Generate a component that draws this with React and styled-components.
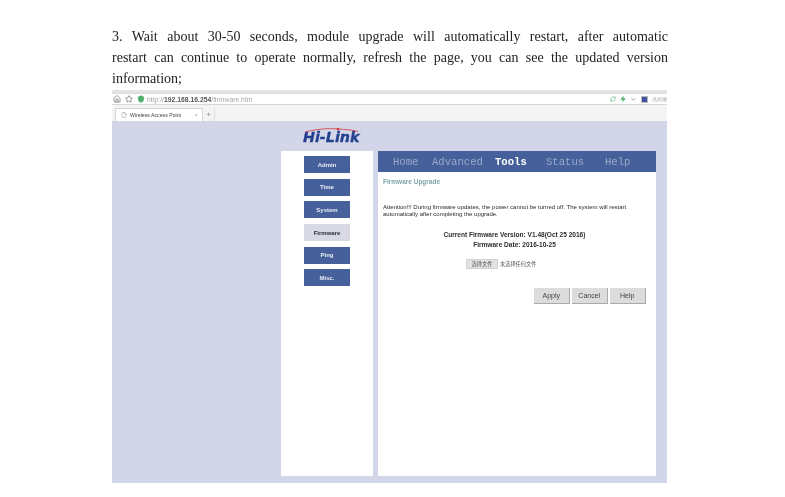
import React from 'react';
import styled, { createGlobalStyle } from 'styled-components';
import { Home, Star, ShieldCheck, File, RefreshCw, Zap, ChevronDown } from 'lucide-react';

const GlobalStyle = createGlobalStyle`
  html, body {
    margin: 0;
    padding: 0;
    background: #fff;
  }
`;

const Page = styled.div`
  width: 785px;
  height: 497px;
  overflow: hidden;
  box-sizing: border-box;
  padding: 26px 117px 0 112px;
`;

const Paragraph = styled.div`
  margin: 0 0 1px;
  font-family: "Liberation Serif", serif;
  font-size: 14px;
  line-height: 21px;
  color: #222;
  filter: blur(0.25px);
`;

const Line = styled.div`
  white-space: nowrap;
  text-align: ${(p) => (p.$last ? 'left' : 'justify')};
  text-align-last: ${(p) => (p.$last ? 'left' : 'justify')};
`;

const Shot = styled.div`
  width: 555px;
  height: 393px;
  display: flex;
  flex-direction: column;
  filter: blur(0.4px);
`;

const TopStrip = styled.div`
  height: 3px;
  background: #e4e4e4;
`;

const UrlBar = styled.div`
  height: 12px;
  box-sizing: border-box;
  display: flex;
  align-items: center;
  gap: 4px;
  padding: 0 0 0 1px;
  background: #fff;
  border-bottom: 1px solid #d8d8d8;
  border-top: 1px solid #ddd;
  font-family: "Liberation Sans", sans-serif;
  font-size: 6.8px;
  color: #a8a8a8;
`;

const UrlText = styled.span`
  margin-left: -2px;
  flex: 1;
  b {
    color: #555;
    font-weight: 700;
  }
`;

const UrlExtras = styled.div`
  display: flex;
  align-items: center;
  gap: 4px;
  font-size: 5px;
  color: #999;
`;

const Avatar = styled.span`
  width: 7px;
  height: 7px;
  background: #3f55a0;
  border: 1px solid #bbb;
  box-sizing: border-box;
`;

const TabBar = styled.div`
  height: 16px;
  display: flex;
  align-items: flex-end;
  background: #f4f4f4;
  padding-left: 3px;
  font-family: "Liberation Sans", sans-serif;
  font-size: 5.2px;
  color: #444;
`;

const Tab = styled.div`
  width: 88px;
  height: 13px;
  box-sizing: border-box;
  display: flex;
  align-items: center;
  gap: 3px;
  padding: 0 4px 0 5px;
  background: #fff;
  border: 1px solid #d4d4d4;
  border-bottom: none;
  span {
    flex: 1;
  }
  i {
    font-style: normal;
    font-size: 6px;
    color: #aaa;
  }
`;

const NewTab = styled.div`
  width: 11px;
  height: 13px;
  line-height: 13px;
  text-align: center;
  font-size: 8px;
  color: #888;
  border-right: 1px solid #ddd;
`;

const Site = styled.div`
  flex: 1;
  min-height: 0;
  background: #d3d6e8;
  display: flex;
  flex-direction: column;
  align-items: flex-end;
  padding-right: 11px;
`;

const LogoBar = styled.div`
  height: 30px;
  width: 375px;
  display: flex;
  align-items: center;
  padding-left: 22px;
  box-sizing: border-box;
`;

const Logo = styled.div`
  position: relative;
  top: 1px;
  font-family: "DejaVu Sans", sans-serif;
  font-size: 14.3px;
  font-weight: 700;
  font-style: italic;
  line-height: 15px;
  color: #23408f;
  -webkit-text-stroke: 0.3px #23408f;
  svg {
    position: absolute;
    left: 0;
    top: -3px;
  }
`;

const Columns = styled.div`
  width: 375px;
  height: 325px;
  display: flex;
  gap: 5px;
`;

const Sidebar = styled.div`
  width: 92px;
  background: #fff;
  display: flex;
  flex-direction: column;
  align-items: center;
  gap: 5.7px;
  padding-top: 5px;
  box-sizing: border-box;
`;

const NavButton = styled.div`
  width: 46px;
  height: 17px;
  display: flex;
  align-items: center;
  justify-content: center;
  font-family: "Liberation Sans", sans-serif;
  font-size: 6px;
  font-weight: 700;
  background: ${(p) => (p.$active ? '#d9d9e6' : '#45609a')};
  color: ${(p) => (p.$active ? '#2a2a3a' : '#e8ecf6')};
`;

const Main = styled.div`
  flex: 1;
  background: #fff;
  display: flex;
  flex-direction: column;
`;

const MainNav = styled.div`
  height: 21px;
  background: #45609a;
  display: flex;
  align-items: center;
  padding-left: 15px;
  font-family: "Liberation Mono", monospace;
  font-size: 10.6px;
  color: #9aa9c8;
`;

const MainNavItem = styled.span`
  width: ${(p) => p.$width}px;
  color: ${(p) => (p.$active ? '#fff' : '#9aa9c8')};
  font-weight: ${(p) => (p.$active ? 700 : 400)};
`;

const Content = styled.div`
  padding: 5px 5px 0 5px;
  font-family: "Liberation Sans", sans-serif;
  font-size: 6px;
  color: #2a2a2a;
`;

const SectionTitle = styled.div`
  font-size: 6.5px;
  font-weight: 700;
  line-height: 9px;
  color: #7fa5ab;
`;

const Notice = styled.div`
  margin-top: 18px;
  line-height: 7px;
  font-size: 6px;
`;

const VersionBlock = styled.div`
  margin-top: 12px;
  text-align: center;
  font-size: 6.55px;
  font-weight: 700;
  line-height: 10px;
  color: #2d2d2d;
  padding-right: 5px;
`;

const FileRow = styled.div`
  margin-top: 9px;
  display: flex;
  align-items: center;
  gap: 2px;
  padding-left: 83px;
  font-family: "Noto Sans CJK SC", sans-serif;
  font-size: 5.2px;
  line-height: 8px;
  color: #555;
`;

const FileButton = styled.span`
  width: 30px;
  height: 8px;
  line-height: 8px;
  text-align: center;
  background: #e2e2e2;
  border: 1px solid #d0d0d0;
`;

const ActionRow = styled.div`
  margin-top: 19px;
  display: flex;
  justify-content: flex-end;
  gap: 1.5px;
  padding-right: 5px;
`;

const ActionButton = styled.div`
  width: 36.5px;
  height: 16px;
  line-height: 15px;
  text-align: center;
  font-size: 7px;
  color: #444;
  background: #dcdcdc;
  border-right: 1px solid #aaa;
  border-bottom: 1px solid #aaa;
  box-sizing: border-box;
`;

const navItems = ['Admin', 'Time', 'System', 'Firmware', 'Ping', 'Misc.'];
const tabs = [
  ['Home', 39],
  ['Advanced', 63],
  ['Tools', 51],
  ['Status', 59],
  ['Help', 30],
];

const App = () => {
  return (
    <Page>
      <GlobalStyle />
      <Paragraph>
        <Line>3. Wait about 30-50 seconds, module upgrade will automatically restart, after automatic</Line>
        <Line>restart can continue to operate normally, refresh the page, you can see the updated version</Line>
        <Line $last>information;</Line>
      </Paragraph>
      <Shot>
        <TopStrip />
        <UrlBar>
          <Home size={8} color="#666" />
          <Star size={8} color="#666" />
          <ShieldCheck size={8} color="#4caf6a" fill="#4caf6a" />
          <UrlText>
            http://<b>192.168.16.254</b>/firmware.htm
          </UrlText>
          <UrlExtras>
            <RefreshCw size={6} color="#4caf6a" />
            <Zap size={6} color="#4caf6a" fill="#4caf6a" />
            <ChevronDown size={7} color="#666" />
            <Avatar />
            <span>点此搜</span>
          </UrlExtras>
        </UrlBar>
        <TabBar>
          <Tab>
            <File size={6} color="#999" />
            <span>Wireless Access Point</span>
            <i>×</i>
          </Tab>
          <NewTab>+</NewTab>
        </TabBar>
        <Site>
          <LogoBar>
            <Logo>
              <svg width="58" height="6" viewBox="0 0 58 6">
                <path d="M2 5 C14 2 26 1 35 2 C42 2.5 50 3 55 4.5" fill="none" stroke="#d8323c" strokeWidth="0.8" />
                <circle cx="35" cy="2" r="1.3" fill="#d8323c" />
              </svg>
              Hi-Link
            </Logo>
          </LogoBar>
          <Columns>
            <Sidebar>
              {navItems.map((item) => (
                <NavButton key={item} $active={item === 'Firmware'}>
                  {item}
                </NavButton>
              ))}
            </Sidebar>
            <Main>
              <MainNav>
                {tabs.map(([label, width]) => (
                  <MainNavItem key={label} $width={width} $active={label === 'Tools'}>
                    {label}
                  </MainNavItem>
                ))}
              </MainNav>
              <Content>
                <SectionTitle>Firmware Upgrade</SectionTitle>
                <Notice>
                  Attention!!! During firmware updates, the power cannot be turned off. The system will restart
                  <br />
                  automatically after completing the upgrade.
                </Notice>
                <VersionBlock>
                  Current Firmware Version: V1.48(Oct 25 2016)
                  <br />
                  Firmware Date: 2016-10-25
                </VersionBlock>
                <FileRow>
                  <FileButton>选择文件</FileButton>
                  <span>未选择任何文件</span>
                </FileRow>
                <ActionRow>
                  <ActionButton>Apply</ActionButton>
                  <ActionButton>Cancel</ActionButton>
                  <ActionButton>Help</ActionButton>
                </ActionRow>
              </Content>
            </Main>
          </Columns>
        </Site>
      </Shot>
    </Page>
  );
};

export default App;
